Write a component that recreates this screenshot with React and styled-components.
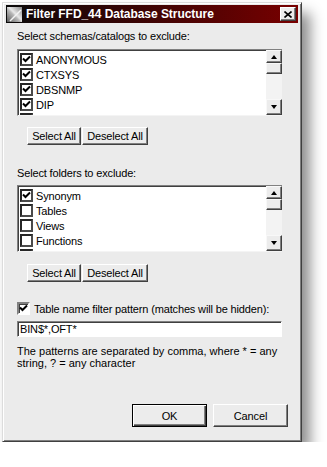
import React from 'react';
import styled, { createGlobalStyle } from 'styled-components';

const GlobalStyle = createGlobalStyle`
  html, body { margin: 0; padding: 0; background: #fff; }
  body {
    font-family: "Liberation Sans", Arial, sans-serif;
    font-size: 11px;
    letter-spacing: -0.15px;
    color: #000;
  }
`;

const Window = styled.div`
  box-sizing: border-box;
  width: 300px;
  height: 440px;
  margin: 2px 0 0 2px;
  padding: 2px 3px;
  background: #ebebeb;
  border: 1px solid;
  border-color: #dcdcdc #404040 #404040 #dcdcdc;
  box-shadow: inset 1px 1px #fff, inset -1px -1px #808080, 8px 11px 13px rgba(0, 0, 0, 0.45);
  display: flex;
  flex-direction: column;
`;

const TitleBar = styled.div`
  height: 18px;
  flex-shrink: 0;
  display: flex;
  align-items: center;
  padding: 0 2px 0 1px;
  background: linear-gradient(to right, #0a0a0a 0%, #3a0404 45%, #780000 100%);
  color: #fff;
`;

const TitleText = styled.span`
  flex: 1;
  margin-left: 4px;
  font-weight: bold;
  font-size: 12px;
  letter-spacing: -0.05px;
  white-space: nowrap;
`;

const CloseButton = styled.div`
  box-sizing: border-box;
  width: 16px;
  height: 14px;
  display: flex;
  align-items: center;
  justify-content: center;
  background: #ececec;
  border: 1px solid;
  border-color: #fff #404040 #404040 #fff;
  box-shadow: inset -1px -1px #808080;
`;

const Content = styled.div`
  flex: 1;
  display: flex;
  flex-direction: column;
  padding-left: 11px;
`;

const Label = styled.div`
  margin-top: ${p => p.$mt}px;
  line-height: 13px;
  white-space: nowrap;
`;

const ListBox = styled.div`
  box-sizing: border-box;
  width: 265px;
  height: 67px;
  margin-top: ${p => p.$mt}px;
  display: flex;
  background: #fff;
  border-top: 1px solid #808080;
  border-left: 1px solid #808080;
  border-bottom: 1px solid #f4f4f4;
`;

const Items = styled.div`
  flex: 1;
  overflow: hidden;
  padding: 1px 0 0 1px;
  border-top: 1px solid #404040;
  border-left: 1px solid #404040;
`;

const Row = styled.div`
  height: 15px;
  display: flex;
  align-items: center;
  gap: 3px;
`;

const Box = styled.div`
  box-sizing: border-box;
  width: 13px;
  height: 13px;
  flex-shrink: 0;
  display: flex;
  align-items: center;
  justify-content: center;
  background: #fff;
  border: 2px solid;
  border-color: ${p => (p.$sunken ? '#808080 #fff #fff #808080' : '#262626 #4a4a4a #4a4a4a #262626')};
  box-shadow: ${p => (p.$sunken ? 'inset 1px 1px #404040' : 'none')};
`;

const ScrollBar = styled.div`
  width: 16px;
  display: flex;
  flex-direction: column;
  background: #f3f3f3;
`;

const ScrollButton = styled.div`
  box-sizing: border-box;
  height: ${p => p.$h}px;
  flex-shrink: 0;
  display: flex;
  align-items: center;
  justify-content: center;
  background: #ececec;
  border: 1px solid;
  border-color: #f8f8f8 #404040 #404040 #f8f8f8;
  box-shadow: inset -1px -1px #808080;
`;

const Track = styled.div`
  flex: 1;
`;

const Arrow = styled.span`
  width: 0;
  height: 0;
  border-left: 3.5px solid transparent;
  border-right: 3.5px solid transparent;
  ${p => (p.$up ? 'border-bottom: 4px solid #000;' : 'border-top: 4px solid #000;')}
`;

const ButtonRow = styled.div`
  display: flex;
  gap: 1px;
  margin: ${p => p.$mt}px 0 0 10px;
`;

const Button = styled.div`
  box-sizing: border-box;
  width: ${p => p.$w}px;
  height: ${p => p.$h || 18}px;
  display: flex;
  align-items: center;
  justify-content: center;
  background: #ececec;
  border: 1px solid;
  border-color: ${p => (p.$default ? '#000' : '#fff #404040 #404040 #fff')};
  box-shadow: ${p =>
    p.$default
      ? 'inset 1px 1px #fff, inset -1px -1px #404040, inset -2px -2px #808080'
      : 'inset -1px -1px #808080'};
  white-space: nowrap;
`;

const FilterRow = styled.div`
  display: flex;
  align-items: center;
  gap: 4px;
  margin-top: 20px;
  height: 13px;
  white-space: nowrap;
`;

const TextInput = styled.div`
  box-sizing: border-box;
  width: 265px;
  height: 16px;
  margin-top: 6px;
  padding: 1px 0 0 2px;
  line-height: 12px;
  background: #fff;
  border: 1px solid;
  border-color: #808080 #fff #fff #808080;
  box-shadow: inset 1px 1px #404040;
`;

const Help = styled.div`
  margin-top: 8px;
  line-height: 12px;
  letter-spacing: 0;
  white-space: nowrap;
`;

const Footer = styled.div`
  margin-top: auto;
  margin-bottom: 12px;
  padding-right: 10px;
  display: flex;
  justify-content: flex-end;
  gap: 6px;
`;

const Check = () => (
  <svg width="9" height="9" viewBox="0 0 9 9">
    <path d="M1 3.5 L3.5 6 L8 1.5" fill="none" stroke="#000" strokeWidth="2" />
  </svg>
);

const WinIcon = () => (
  <svg width="15" height="15" viewBox="0 0 15 15">
    <defs>
      <linearGradient id="ig" x1="0" y1="1" x2="1" y2="0">
        <stop offset="0" stopColor="#5a5a5a" />
        <stop offset="0.45" stopColor="#b8b8b8" />
        <stop offset="0.55" stopColor="#e8e8e8" />
        <stop offset="1" stopColor="#8a8a8a" />
      </linearGradient>
    </defs>
    <rect x="0" y="0" width="15" height="15" fill="url(#ig)" />
    <path d="M3 14 L14 3" stroke="#f4f4f4" strokeWidth="1.5" />
  </svg>
);

const CloseX = () => (
  <svg width="8" height="7" viewBox="0 0 8 7">
    <path d="M0.5 0.5 L7.5 6.5 M7.5 0.5 L0.5 6.5" stroke="#000" strokeWidth="1.6" />
  </svg>
);

const CheckList = ({ items, mt }) => (
  <ListBox $mt={mt}>
    <Items>
      {items.map(([name, on]) => (
        <Row key={name}>
          <Box>{on && <Check />}</Box>
          <span>{name}</span>
        </Row>
      ))}
      <Row>
        <Box />
      </Row>
    </Items>
    <ScrollBar>
      <ScrollButton $h={13}>
        <Arrow $up />
      </ScrollButton>
      <ScrollButton $h={11} />
      <Track />
      <ScrollButton $h={16}>
        <Arrow />
      </ScrollButton>
    </ScrollBar>
  </ListBox>
);

const schemas = [
  ['ANONYMOUS', true],
  ['CTXSYS', true],
  ['DBSNMP', true],
  ['DIP', true],
];

const folders = [
  ['Synonym', true],
  ['Tables', false],
  ['Views', false],
  ['Functions', false],
];

const App = () => (
  <>
    <GlobalStyle />
    <Window>
      <TitleBar>
        <WinIcon />
        <TitleText>Filter FFD_44 Database Structure</TitleText>
        <CloseButton>
          <CloseX />
        </CloseButton>
      </TitleBar>
      <Content>
        <Label $mt={7}>Select schemas/catalogs to exclude:</Label>
        <CheckList items={schemas} mt={6} />
        <ButtonRow $mt={11}>
          <Button $w={54}>Select All</Button>
          <Button $w={66}>Deselect All</Button>
        </ButtonRow>
        <Label $mt={22}>Select folders to exclude:</Label>
        <CheckList items={folders} mt={5} />
        <ButtonRow $mt={12}>
          <Button $w={54}>Select All</Button>
          <Button $w={66}>Deselect All</Button>
        </ButtonRow>
        <FilterRow>
          <Box $sunken>
            <Check />
          </Box>
          <span>Table name filter pattern (matches will be hidden):</span>
        </FilterRow>
        <TextInput>BIN$*,OFT*</TextInput>
        <Help>
          The patterns are separated by comma, where * = any
          <br />
          string, ? = any character
        </Help>
        <Footer>
          <Button $w={75} $h={23} $default>OK</Button>
          <Button $w={75} $h={23}>Cancel</Button>
        </Footer>
      </Content>
    </Window>
  </>
);

export default App;
